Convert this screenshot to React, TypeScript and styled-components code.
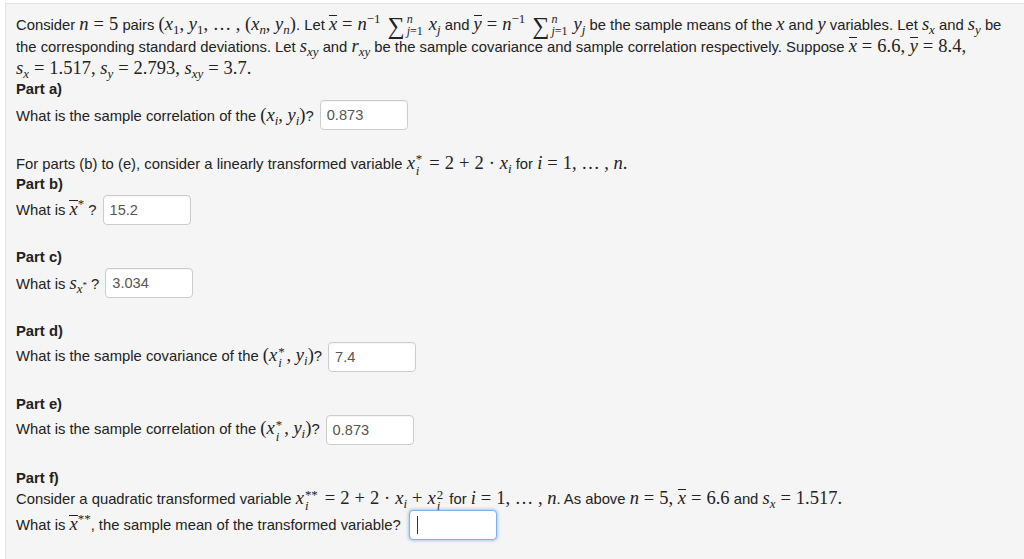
import React from 'react';
import styled, { createGlobalStyle } from 'styled-components';

const GlobalStyle = createGlobalStyle`
  html, body {
    margin: 0;
    padding: 0;
    background: #ffffff;
  }
  body {
    font-family: "Liberation Sans", Arial, Helvetica, sans-serif;
    font-size: 14.8px;
    color: #222;
    overflow: hidden;
  }
`;

// the grey question well
const Panel = styled.div`
  margin: 3px 0 0 5px;
  min-height: 600px;
  background: #f5f5f5;
  border-top: 1px solid #e3e3e3;
  border-left: 1px solid #e3e3e3;
  padding: 9px 0 0 10px;
`;

const Line = styled.div<{ $h?: number }>`
  height: ${({ $h }) => $h || 21}px;
  line-height: ${({ $h }) => $h || 21}px;
  white-space: nowrap;
`;

const PartLabel = styled.div`
  font-weight: bold;
  height: 20px;
  line-height: 20px;
`;

const QuestionRow = styled.div`
  display: flex;
  align-items: center;
  height: 30px;
  margin-top: 1px;
  margin-bottom: 22.6px;
  white-space: nowrap;
`;

const AnswerBox = styled.div<{ $focus?: boolean }>`
  box-sizing: border-box;
  width: 88px;
  height: 30px;
  margin-left: ${({ $focus }) => ($focus ? 8 : 6)}px;
  padding: 0 6px;
  display: flex;
  align-items: center;
  background: #fff;
  border: 1px solid ${({ $focus }) => ($focus ? '#7fb0e6' : '#cccccc')};
  border-radius: 4px;
  box-shadow: ${({ $focus }) =>
    $focus ? '0 0 3px 1px rgba(110, 165, 235, 0.55)' : 'inset 0 1px 1px rgba(0,0,0,0.04)'};
  color: #555;
  font-size: 14.6px;
`;

const Caret = styled.span`
  display: inline-block;
  width: 1px;
  height: 18px;
  background: #333;
  margin-left: 1px;
`;

// math typography
const M = styled.span`
  font-family: "Liberation Serif", "Times New Roman", serif;
  font-size: 18.5px;
`;

const V = styled.i`
  font-family: "Liberation Serif", "Times New Roman", serif;
  font-style: italic;
`;

const Sub = styled.sub`
  font-size: 0.7em;
  vertical-align: -0.3em;
  line-height: 0;
`;

const Sup = styled.sup`
  font-size: 0.7em;
  vertical-align: 0.55em;
  line-height: 0;
`;

// superscript and subscript stacked on the same base
const SubSup = styled.span`
  display: inline-flex;
  flex-direction: column;
  vertical-align: 0.4em;
  font-size: 0.7em;
  line-height: 0.9;
  margin: 0 2px 0 1px;
`;

const Bar = styled.span`
  display: inline-block;
  font-family: "Liberation Serif", "Times New Roman", serif;
  font-style: italic;
  line-height: 0.95;
  border-top: 1px solid #222;
  padding-top: 0;
`;

const SumWrap = styled.span`
  display: inline-flex;
  align-items: center;
  vertical-align: middle;
  margin: 0 6px 0 7px;
`;

const SumSign = styled.span`
  font-size: 1.3em;
  line-height: 1;
`;

const Limits = styled.span`
  display: inline-flex;
  flex-direction: column;
  font-size: 0.65em;
  line-height: 0.95;
  margin-left: 2px;
`;

const Op = styled.span`
  margin: 0 0.27em;
`;

const Sum = () => (
  <SumWrap>
    <SumSign>∑</SumSign>
    <Limits>
      <V>n</V>
      <span>
        <V>j</V>=1
      </span>
    </Limits>
  </SumWrap>
);

const Question = ({
  children,
  value,
  focus,
}: {
  children: React.ReactNode;
  value?: string;
  focus?: boolean;
}) => (
  <QuestionRow>
    <span>{children}</span>
    <AnswerBox $focus={focus}>{focus ? <Caret /> : value}</AnswerBox>
  </QuestionRow>
);

const Xi = ({ sup }: { sup?: string }) =>
  sup ? (
    <>
      <V>x</V>
      <SubSup>
        <span>{sup}</span>
        <V>i</V>
      </SubSup>
    </>
  ) : (
    <>
      <V>x</V>
      <Sub>
        <V>i</V>
      </Sub>
    </>
  );

const Pair = ({ star }: { star?: boolean }) => (
  <M>
    (<Xi sup={star ? '*' : undefined} />, <V>y</V>
    <Sub>
      <V>i</V>
    </Sub>
    )
  </M>
);

const App: React.FC = () => {
  return (
    <>
      <GlobalStyle />
      <Panel>
        <Line $h={22}>
          Consider{' '}
          <M>
            <V>n</V>
            <Op>=</Op>5
          </M>{' '}
          pairs{' '}
          <M>
            (<V>x</V>
            <Sub>1</Sub>, <V>y</V>
            <Sub>1</Sub>, … , (<V>x</V>
            <Sub>
              <V>n</V>
            </Sub>
            , <V>y</V>
            <Sub>
              <V>n</V>
            </Sub>
            )
          </M>
          . Let{' '}
          <M>
            <Bar>x</Bar>
            <Op>=</Op>
            <V>n</V>
            <Sup>−1</Sup>
            <Sum />
            <V>x</V>
            <Sub>
              <V>j</V>
            </Sub>
          </M>{' '}
          and{' '}
          <M>
            <Bar>y</Bar>
            <Op>=</Op>
            <V>n</V>
            <Sup>−1</Sup>
            <Sum />
            <V>y</V>
            <Sub>
              <V>j</V>
            </Sub>
          </M>{' '}
          be the sample means of the{' '}
          <M>
            <V>x</V>
          </M>{' '}
          and{' '}
          <M>
            <V>y</V>
          </M>{' '}
          variables. Let{' '}
          <M>
            <V>s</V>
            <Sub>
              <V>x</V>
            </Sub>
          </M>{' '}
          and{' '}
          <M>
            <V>s</V>
            <Sub>
              <V>y</V>
            </Sub>
          </M>{' '}
          be
        </Line>
        <Line $h={22}>
          the corresponding standard deviations. Let{' '}
          <M>
            <V>s</V>
            <Sub>
              <V>xy</V>
            </Sub>
          </M>{' '}
          and{' '}
          <M>
            <V>r</V>
            <Sub>
              <V>xy</V>
            </Sub>
          </M>{' '}
          be the sample covariance and sample correlation respectively. Suppose{' '}
          <M>
            <Bar>x</Bar>
            <Op>=</Op>6.6, <Bar>y</Bar>
            <Op>=</Op>8.4,
          </M>
        </Line>
        <Line $h={22}>
          <M>
            <V>s</V>
            <Sub>
              <V>x</V>
            </Sub>
            <Op>=</Op>1.517, <V>s</V>
            <Sub>
              <V>y</V>
            </Sub>
            <Op>=</Op>2.793, <V>s</V>
            <Sub>
              <V>xy</V>
            </Sub>
            <Op>=</Op>3.7.
          </M>
        </Line>

        <PartLabel>Part a)</PartLabel>
        <Question value="0.873">
          What is the sample correlation of the <Pair />?
        </Question>

        <Line>
          For parts (b) to (e), consider a linearly transformed variable{' '}
          <M>
            <Xi sup="*" />
            <Op>=</Op>2<Op>+</Op>2<Op>·</Op>
            <Xi />
          </M>{' '}
          for{' '}
          <M>
            <V>i</V>
            <Op>=</Op>1, … , <V>n</V>.
          </M>
        </Line>
        <PartLabel>Part b)</PartLabel>
        <Question value="15.2">
          What is{' '}
          <M>
            <Bar>x</Bar>
            <Sup>*</Sup>
          </M>{' '}
          ?
        </Question>

        <PartLabel>Part c)</PartLabel>
        <Question value="3.034">
          What is{' '}
          <M>
            <V>s</V>
            <Sub>
              <V>x</V>
              <Sup>*</Sup>
            </Sub>
          </M>{' '}
          ?
        </Question>

        <PartLabel>Part d)</PartLabel>
        <Question value="7.4">
          What is the sample covariance of the <Pair star />?
        </Question>

        <PartLabel>Part e)</PartLabel>
        <Question value="0.873">
          What is the sample correlation of the <Pair star />?
        </Question>

        <PartLabel>Part f)</PartLabel>
        <Line>
          Consider a quadratic transformed variable{' '}
          <M>
            <Xi sup="**" />
            <Op>=</Op>2<Op>+</Op>2<Op>·</Op>
            <Xi />
            <Op>+</Op>
            <Xi sup="2" />
          </M>{' '}
          for{' '}
          <M>
            <V>i</V>
            <Op>=</Op>1, … , <V>n</V>
          </M>
          . As above{' '}
          <M>
            <V>n</V>
            <Op>=</Op>5, <Bar>x</Bar>
            <Op>=</Op>6.6
          </M>{' '}
          and{' '}
          <M>
            <V>s</V>
            <Sub>
              <V>x</V>
            </Sub>
            <Op>=</Op>1.517.
          </M>
        </Line>
        <Question focus>
          What is{' '}
          <M>
            <Bar>x</Bar>
            <Sup>**</Sup>
          </M>
          , the sample mean of the transformed variable?
        </Question>
      </Panel>
    </>
  );
};

export default App;
